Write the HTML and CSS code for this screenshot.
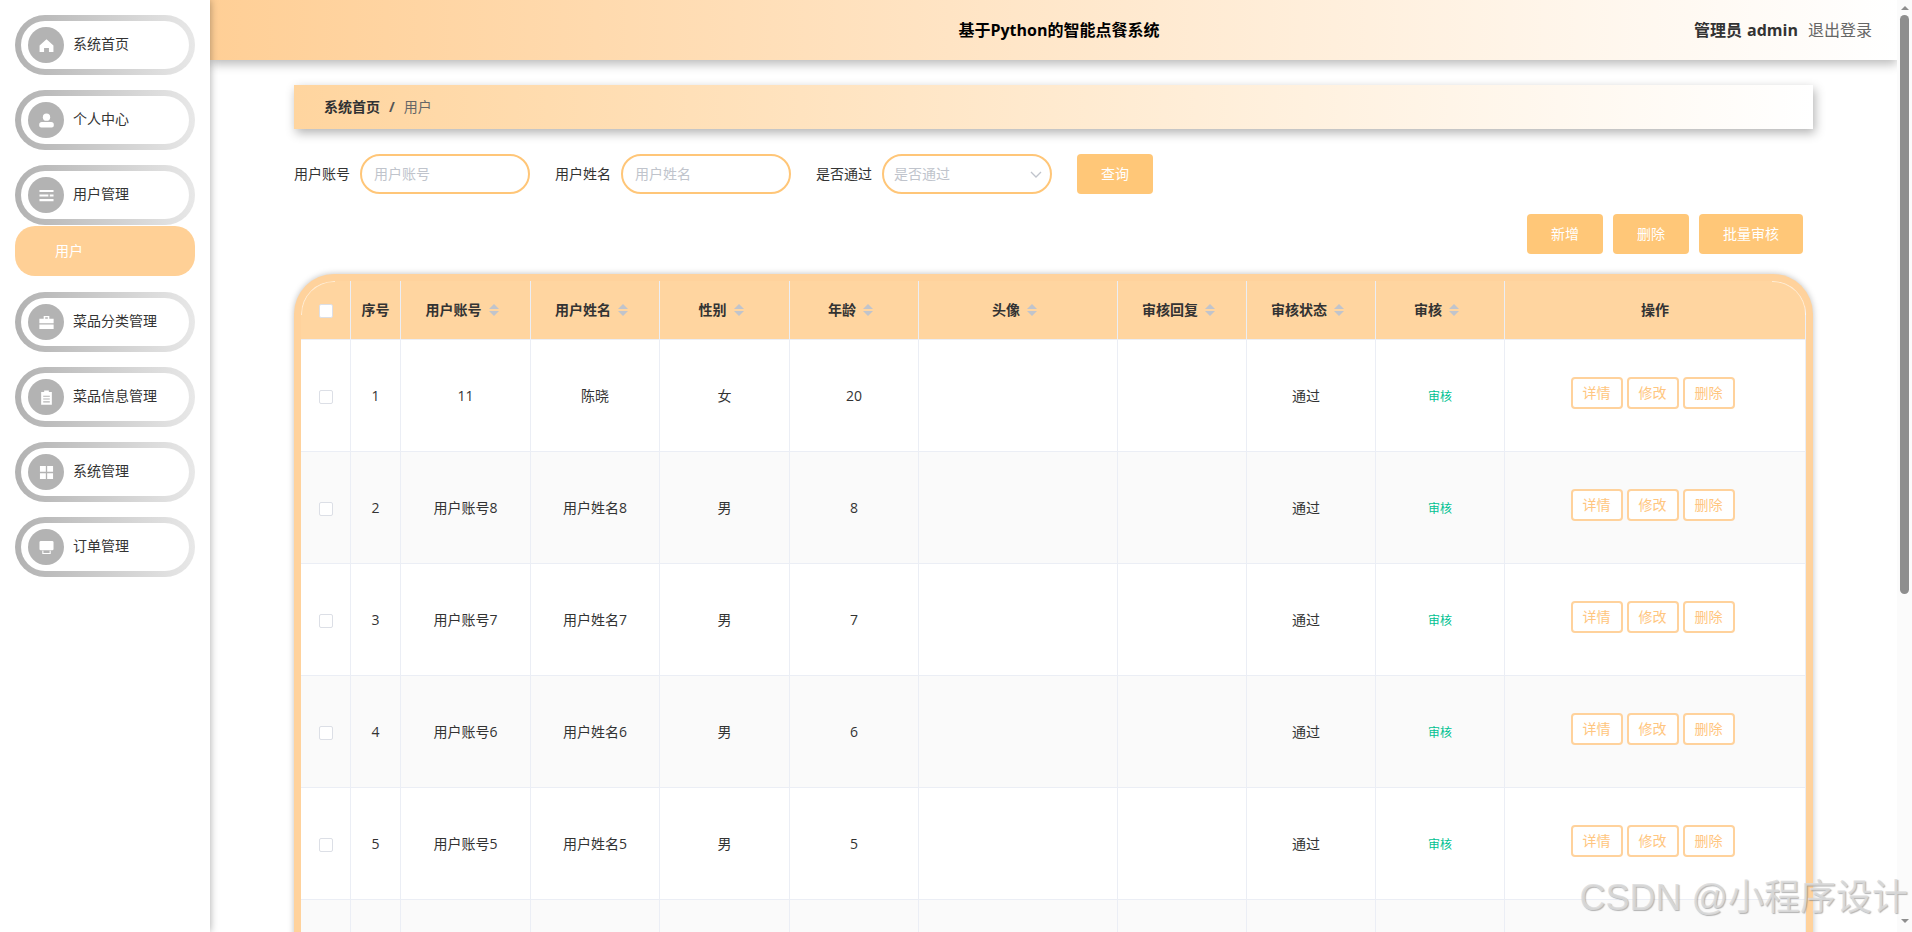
FILE: index.html
```html
<!DOCTYPE html>
<html lang="zh">
<head>
<meta charset="utf-8">
<title>基于Python的智能点餐系统</title>
<link rel="stylesheet" href="styles.css">
</head>
<body>
<div class="app">
  <aside class="sidebar">
    <a class="menu-item"><span class="menu-icon"><svg viewBox="0 0 16 16"><path d="M8 1.2 15.4 8v7H10.6v-4.400H5.400V15H.6V8z"/></svg></span><span class="label">系统首页</span></a>
    <a class="menu-item"><span class="menu-icon"><svg viewBox="0 0 16 16"><circle cx="8" cy="4.400" r="3.900"/><path d="M3 9.600h10a2.800 2.800 0 0 1 2.800 2.800v.8a2.200 2.200 0 0 1-2.200 2.200H2.400a2.200 2.200 0 0 1-2.200-2.200v-.8A2.800 2.800 0 0 1 3 9.600z"/></svg></span><span class="label">个人中心</span></a>
    <a class="menu-item"><span class="menu-icon"><svg viewBox="0 0 16 16"><path d="M.5 2h15v2.200H.5zM.5 6.900h9.500v2.200H.5zM11.500 6.900h4v2.200h-4zM.5 11.800h15V14H.5z"/></svg></span><span class="label">用户管理</span></a>
    <a class="menu-sub"><span class="label">用户</span></a>
    <a class="menu-item menu-after-sub"><span class="menu-icon"><svg viewBox="0 0 16 16"><path d="M5 1h6v3h4.600v4.800H.4V4H5zM6.600 2.500V4h2.800V2.500zM.4 10h15.200v5H.4z"/></svg></span><span class="label">菜品分类管理</span></a>
    <a class="menu-item"><span class="menu-icon"><svg viewBox="0 0 16 16"><path d="M5.500.5h5V2h3.200v13.600H2.300V2h3.200zM4.500 6v1.200h7V6zM4.500 9v1.200h7V9zM4.500 12v1.200h7V12z"/></svg></span><span class="label">菜品信息管理</span></a>
    <a class="menu-item"><span class="menu-icon"><svg viewBox="0 0 16 16"><path d="M1 1h6.300v6.300H1zM8.700 1H15v6.300H8.700zM1 8.700h6.300V15H1zM8.700 8.700H15V15H8.700z"/></svg></span><span class="label">系统管理</span></a>
    <a class="menu-item"><span class="menu-icon"><svg viewBox="0 0 16 16"><path d="M2 1h12a1.500 1.500 0 0 1 1.500 1.500V9.500A1.500 1.500 0 0 1 14 11H2A1.500 1.500 0 0 1 .5 9.500V2.500A1.500 1.500 0 0 1 2 1zM3.500 11.500h1.200v2.300h6.600v-2.300h1.200V15h-9z"/></svg></span><span class="label">订单管理</span></a>
  </aside>

  <div class="main">
    <header class="topbar">
      <div class="title">基于Python的智能点餐系统</div>
      <div class="user">
        <span class="user-name">管理员 admin</span>
        <span class="logout">退出登录</span>
      </div>
    </header>

    <div class="content">
      <nav class="breadcrumb"><b>系统首页</b><i>/</i><span>用户</span></nav>

      <form class="search">
        <label class="field"><span class="label">用户账号</span><input class="pill" placeholder="用户账号"></label>
        <label class="field"><span class="label">用户姓名</span><input class="pill" placeholder="用户姓名"></label>
        <div class="field"><span class="label">是否通过</span>
          <div class="pill select"><span class="label">是否通过</span><svg viewBox="0 0 14 14"><path d="M2 5l5 5 5-5"/></svg></div>
        </div>
        <button class="btn" type="button">查询</button>
      </form>

      <div class="actions">
        <button class="btn" type="button">新增</button>
        <button class="btn" type="button">删除</button>
        <button class="btn btn-wide" type="button">批量审核</button>
      </div>

      <div class="table-card">
        <div class="table-clip">
          <table class="grid">
            <colgroup>
              <col class="c-49"><col class="c-50"><col class="c-130"><col class="c-129"><col class="c-130"><col class="c-129"><col class="c-199"><col class="c-129"><col class="c-129"><col class="c-129"><col>
            </colgroup>
            <thead>
              <tr>
                <th><span class="check"></span></th>
                <th>序号</th>
                <th>用户账号<span class="sort"></span></th>
                <th>用户姓名<span class="sort"></span></th>
                <th>性别<span class="sort"></span></th>
                <th>年龄<span class="sort"></span></th>
                <th>头像<span class="sort"></span></th>
                <th>审核回复<span class="sort"></span></th>
                <th>审核状态<span class="sort"></span></th>
                <th>审核<span class="sort"></span></th>
                <th>操作</th>
              </tr>
            </thead>
            <tbody>
              <tr><td><span class="check"></span></td><td>1</td><td>11</td><td>陈晓</td><td>女</td><td>20</td><td></td><td></td><td class="status">通过</td><td><a class="audit">审核</a></td><td><div class="ops"><a>详情</a><a>修改</a><a>删除</a></div></td></tr>
              <tr><td><span class="check"></span></td><td>2</td><td>用户账号8</td><td>用户姓名8</td><td>男</td><td>8</td><td></td><td></td><td class="status">通过</td><td><a class="audit">审核</a></td><td><div class="ops"><a>详情</a><a>修改</a><a>删除</a></div></td></tr>
              <tr><td><span class="check"></span></td><td>3</td><td>用户账号7</td><td>用户姓名7</td><td>男</td><td>7</td><td></td><td></td><td class="status">通过</td><td><a class="audit">审核</a></td><td><div class="ops"><a>详情</a><a>修改</a><a>删除</a></div></td></tr>
              <tr><td><span class="check"></span></td><td>4</td><td>用户账号6</td><td>用户姓名6</td><td>男</td><td>6</td><td></td><td></td><td class="status">通过</td><td><a class="audit">审核</a></td><td><div class="ops"><a>详情</a><a>修改</a><a>删除</a></div></td></tr>
              <tr><td><span class="check"></span></td><td>5</td><td>用户账号5</td><td>用户姓名5</td><td>男</td><td>5</td><td></td><td></td><td class="status">通过</td><td><a class="audit">审核</a></td><td><div class="ops"><a>详情</a><a>修改</a><a>删除</a></div></td></tr>
              <tr><td></td><td></td><td></td><td></td><td></td><td></td><td></td><td></td><td></td><td></td><td></td></tr>
            </tbody>
          </table>
        </div>
      </div>
    </div>
  </div>

  <div class="scrollbar">
    <span class="arrow-up"></span>
    <span class="thumb"></span>
    <span class="arrow-down"></span>
  </div>
</div>
<div class="watermark">CSDN @小程序设计</div>
</body>
</html>
```

FILE: styles.css
```css
* { box-sizing: border-box; }
html, body { margin: 0; height: 100%; overflow: hidden; background: #fff; }
body {
  font-family: "Open Sans", "Noto Sans CJK SC", sans-serif;
  font-size: 14px;
  color: #333;
}
.app { display: flex; height: 932px; overflow: hidden; }
.label { padding-bottom: 2px; }

/* sidebar */
.sidebar {
  flex: 0 0 210px;
  padding: 15px;
  background: #fff;
  box-shadow: 0 0 8px rgba(0, 0, 0, .35);
  position: relative;
  z-index: 3;
  display: flex;
  flex-direction: column;
  align-items: stretch;
}
.menu-item {
  height: 60px;
  flex: none;
  margin-bottom: 15px;
  padding-left: 7px;
  display: flex;
  align-items: center;
  gap: 9px;
  border: 6px solid transparent;
  border-radius: 30px;
  background: linear-gradient(#fff, #fff) padding-box,
              linear-gradient(90deg, #b2b2b2, #e8e8e8) border-box;
  line-height: 20px;
}
.menu-icon {
  width: 36px;
  height: 36px;
  flex: none;
  border-radius: 50%;
  background: #b3b3b3;
  display: flex;
  align-items: center;
  justify-content: center;
}
.menu-icon svg { width: 15px; height: 15px; fill: #fff; display: block; }
.menu-sub {
  height: 50px;
  flex: none;
  margin-top: -14px;
  padding-left: 40px;
  display: flex;
  align-items: center;
  border-radius: 20px;
  background: #ffd096;
  color: #fff;
}
.menu-after-sub { margin-top: 16px; }

/* main column */
.main { flex: 1; min-width: 0; display: flex; flex-direction: column; }
.topbar {
  height: 60px;
  flex: none;
  padding-bottom: 2px;
  display: flex;
  align-items: center;
  justify-content: center;
  position: relative;
  z-index: 2;
  background: linear-gradient(90deg, #ffcf96, #fff);
  box-shadow: 0 4px 10px rgba(0, 0, 0, .28);
}
.title { font-size: 16px; font-weight: 700; color: #000; margin-left: 11px; }
.user {
  position: absolute;
  right: 25px;
  top: 0;
  height: 58px;
  display: flex;
  align-items: center;
  gap: 10px;
}
.user-name { font-size: 16px; font-weight: 700; color: #333; word-spacing: 1px; }
.logout { font-size: 16px; color: #666; }

.content { padding: 25px 84px 0; flex: 1; min-height: 0; }
.breadcrumb {
  height: 44px;
  padding: 0 0 2px 30px;
  display: flex;
  align-items: center;
  background: linear-gradient(90deg, #ffd59f, #fff);
  box-shadow: 2px 4px 10px rgba(0, 0, 0, .3);
}
.breadcrumb b { font-weight: 700; color: #303133; }
.breadcrumb i { font-style: normal; font-weight: 700; color: #555; margin: 0 9px; }
.breadcrumb span { color: #666; }

.search { display: flex; align-items: center; margin-top: 25px; height: 40px; }
.field { display: flex; align-items: center; gap: 10px; margin-right: 25px; padding-left: 1px; margin-left: -1px; }
.field + .field { margin-left: 0; padding-left: 0; }
.pill {
  width: 170px;
  height: 40px;
  padding: 0 12px 2px;
  border: 2px solid #ffc678;
  border-radius: 20px;
  background: #fff;
  font: inherit;
  color: #c0c4cc;
  outline: none;
}
.pill::placeholder { color: #c0c4cc; opacity: 1; }
.select { display: flex; align-items: center; justify-content: space-between; padding: 0 7px 0 10px; }
.select svg { width: 14px; height: 14px; fill: none; stroke: #c0c4cc; stroke-width: 1.3; }

.btn {
  width: 76px;
  height: 40px;
  border: 0;
  border-radius: 4px;
  background: #ffc778;
  color: #fff;
  font: inherit;
  padding: 0 0 2px 0;
}
.btn-wide { width: 104px; }
.actions { display: flex; justify-content: flex-end; gap: 10px; margin-top: 20px; padding-right: 10px; }

/* table */
.table-card {
  margin-top: 20px;
  border: 7px solid #ffd29c;
  border-bottom: 0;
  border-radius: 40px 40px 0 0;
  background: #ffd5a0;
  box-shadow: 0 0 6px rgba(0, 0, 0, .25);
}
.table-clip { position: relative; border-radius: 33px 33px 0 0; overflow: hidden; }
.table-clip::before,
.table-clip::after {
  content: "";
  position: absolute;
  top: 0;
  width: 33px;
  height: 33px;
  border-top: 1px solid rgba(255, 255, 255, .55);
  pointer-events: none;
}
.table-clip::before { left: 0; border-left: 1px solid rgba(255, 255, 255, .55); border-top-left-radius: 33px; }
.table-clip::after { right: 0; border-right: 1px solid rgba(255, 255, 255, .55); border-top-right-radius: 33px; }
.grid { width: 1505px; table-layout: fixed; border-collapse: separate; border-spacing: 0; margin: 0; }
.c-49 { width: 49px; }
.c-50 { width: 50px; }
.c-130 { width: 130px; }
.c-129 { width: 129px; }
.c-199 { width: 199px; }
.grid th, .grid td { padding: 0; text-align: center; border-left: 1px solid #ebeef5; border-bottom: 1px solid #ebeef5; }
.grid th:first-child, .grid td:first-child { border-left: 0; }
.grid th:last-child, .grid td:last-child { border-right: 1px solid #ebeef5; }
.grid th { height: 59px; padding-bottom: 2px; font-weight: 700; color: #333; background: #ffd5a0; }
.grid td { height: 112px; padding-bottom: 1px; background: #fff; }
.grid tbody tr:nth-child(even) td { background: #fafafa; }
.grid td.status { padding-right: 10px; }
.check {
  display: inline-block;
  width: 14px;
  height: 14px;
  vertical-align: middle;
  border: 1px solid #dcdfe6;
  border-radius: 2px;
  background: #fff;
}
.sort {
  display: inline-block;
  position: relative;
  width: 24px;
  height: 14px;
  vertical-align: -2px;
}
.sort::before, .sort::after {
  content: "";
  position: absolute;
  left: 7px;
  border: 5px solid transparent;
}
.sort::before { top: -4px; border-bottom-color: #c0c4cc; }
.sort::after { bottom: -4px; border-top-color: #c0c4cc; }
.audit { font-size: 12px; color: #00c292; }
.ops { display: flex; justify-content: center; gap: 4px; margin: -5px 0 0 -5px; }
.ops a {
  width: 52px;
  height: 32px;
  border: 2px solid #ffd29c;
  border-radius: 4px;
  color: #ffc680;
  line-height: 27px;
  background: #fff;
}

/* scrollbar */
.scrollbar {
  flex: 0 0 15px;
  position: relative;
  z-index: 4;
  background: #fbfbfb;
  display: flex;
  flex-direction: column;
  align-items: center;
}
.thumb { width: 9px; height: 579px; margin-top: 5px; border-radius: 5px; background: #8e8e8e; }
.arrow-up, .arrow-down { width: 0; height: 0; border: 4.500px solid transparent; }
.arrow-up { margin-top: 6px; border-top: 0; border-bottom-color: #8e8e8e; }
.arrow-down { margin-top: auto; margin-bottom: 9px; border-bottom: 0; border-top-color: #8e8e8e; }

.watermark {
  position: absolute;
  right: 4px;
  top: 876px;
  z-index: 5;
  font-family: "Liberation Sans", "Noto Sans CJK SC", sans-serif;
  font-size: 36px;
  line-height: 44px;
  white-space: nowrap;
  color: rgba(220, 220, 220, .85);
  text-shadow: 1px 1px 1px rgba(120, 120, 120, .55);
}
```
